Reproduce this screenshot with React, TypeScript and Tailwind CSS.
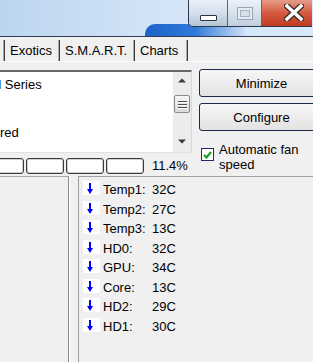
import React from 'react'

const SENSORS = [
  { label: 'Temp1:', value: '32C' },
  { label: 'Temp2:', value: '27C' },
  { label: 'Temp3:', value: '13C' },
  { label: 'HD0:', value: '32C' },
  { label: 'GPU:', value: '34C' },
  { label: 'Core:', value: '13C' },
  { label: 'HD2:', value: '29C' },
  { label: 'HD1:', value: '30C' },
]

function DownArrow() {
  return (
    <div className="w-[17px] h-[14px] bg-white flex-shrink-0">
      <svg width="17" height="14" viewBox="0 0 17 14">
        <rect x="6" y="2" width="2" height="7" fill="#0000ff" />
        <path d="M4 8 L10 8 L7 13 Z" fill="#0000ff" />
      </svg>
    </div>
  )
}

function WindowButtons() {
  return (
    <div className="relative self-start flex-shrink-0 ml-[-58px] flex h-[27px] border-l border-b border-[#2e3a4c] rounded-bl-[5px] overflow-hidden">
      {/* minimize */}
      <div className="w-[39px] border-r border-[#5a6878] bg-gradient-to-b from-[#eaf1f8] via-[#d3dfeb] to-[#b4c4d6] flex items-end justify-center pb-[5px]">
        <div className="w-[17px] h-[6px] rounded-[1px] bg-white border border-[#2c3440]" />
      </div>
      {/* maximize (disabled look) */}
      <div className="w-[34px] border-r border-[#5a6878] bg-gradient-to-b from-[#eaf1f8] via-[#d7e2ed] to-[#c0cedc] flex items-start justify-center pt-[7px]">
        <div className="w-[16px] h-[13px] border border-[#9aa6b4] bg-[#e4ebf2] p-[2px]">
          <div className="w-full h-full border border-[#a6b2bf] bg-[#d6dfe8]" />
        </div>
      </div>
      {/* close */}
      <div className="w-[50px] bg-gradient-to-b from-[#e59a88] via-[#d45a40] to-[#c03a22] flex items-start pl-[22px] pt-[4px]">
        <svg width="20" height="17" viewBox="0 0 20 17">
          <path d="M3 2 L17 15 M17 2 L3 15" stroke="#3a2a26" strokeWidth="6" strokeLinecap="square" />
          <path d="M3 2 L17 15 M17 2 L3 15" stroke="#ffffff" strokeWidth="3.5" strokeLinecap="square" />
        </svg>
      </div>
    </div>
  )
}

function Tab({ label, width }: { label: string; width: string }) {
  return (
    <div
      className={`${width} h-[21px] pl-[5px] flex items-center border-r border-[#3c3c3c] shadow-[inset_-1px_0_0_#a8a8a8] leading-none`}
    >
      {label}
    </div>
  )
}

function ScrollBar() {
  return (
    <div className="w-[18px] h-full bg-[#ececec] flex flex-col items-center">
      <div className="h-[17px] w-full flex items-center justify-center">
        <svg width="8" height="5" viewBox="0 0 8 5">
          <path d="M0 4.5 L4 0.5 L8 4.5 Z" fill="#3a3a3a" />
        </svg>
      </div>
      <div className="mt-[6px] w-[16px] h-[18px] rounded-[2px] border border-[#8a8a8a] bg-gradient-to-b from-[#f6f6f6] to-[#dadada] flex flex-col items-center justify-center gap-[2px]">
        <div className="w-[9px] h-[1px] bg-[#4c4c4c] shadow-[0_1px_0_#ffffff]" />
        <div className="w-[9px] h-[1px] bg-[#4c4c4c] shadow-[0_1px_0_#ffffff]" />
        <div className="w-[9px] h-[1px] bg-[#4c4c4c] shadow-[0_1px_0_#ffffff]" />
      </div>
      <div className="mt-auto mb-[2px] h-[17px] w-full flex items-center justify-center">
        <svg width="8" height="5" viewBox="0 0 8 5">
          <path d="M0 0.5 L4 4.5 L8 0.5 Z" fill="#3a3a3a" />
        </svg>
      </div>
    </div>
  )
}

export default function App() {
  return (
    <div className="w-[313px] h-[362px] overflow-hidden bg-[#f0f0f0] text-black text-[13px] font-['Liberation_Sans',Arial,sans-serif] flex flex-col">
      {/* Title bar */}
      <div className="h-[37px] flex-shrink-0 border-b border-[#33404f] bg-gradient-to-r from-[#bcd5ef] via-[#d2e4f7] to-[#d9e9f9] flex items-end">
        {/* blue glow at the bottom of the glass frame */}
        <div className="ml-[145px] w-[101px] h-[12px] flex-shrink-0 rounded-tl-[10px] rounded-tr-[4px] bg-gradient-to-r from-[#1e62c9] via-[#2f7ad8] to-[#cfe2f6]" />
        <WindowButtons />
      </div>

      {/* Tabs */}
      <div className="h-[25px] flex-shrink-0 flex items-start pt-[3px] border-b border-white">
        <div className="w-[5px] h-[21px] border-r border-[#3c3c3c] shadow-[inset_-1px_0_0_#a8a8a8]" />
        <Tab label="Exotics" width="w-[55px]" />
        <Tab label="S.M.A.R.T." width="w-[75px]" />
        <Tab label="Charts" width="w-[53px]" />
      </div>

      {/* Top section */}
      <div className="flex pt-[7px] flex-shrink-0">
        <div className="w-[192px] flex-shrink-0 flex flex-col">
          <div className="mt-[1px] h-[83px] border-t-2 border-t-[#6a6a6a] border-r border-r-[#d8d8d8] border-b border-b-[#e2e2e2] bg-white flex">
            <div className="flex-1 pt-[1px] leading-[24px] whitespace-nowrap overflow-hidden">
              <div className="ml-[-6px]">d Series</div>
              <div>&nbsp;</div>
              <div>red</div>
            </div>
            <ScrollBar />
          </div>
          <div className="mt-[5px] flex items-center gap-[2px]">
            <div className="ml-[-14px] w-[38px] h-[16px] rounded-[3px] border border-[#3a3a3a] bg-white shadow-[inset_0_0_0_1px_#d0d0d0]" />
            <div className="w-[38px] h-[16px] rounded-[3px] border border-[#3a3a3a] bg-white shadow-[inset_0_0_0_1px_#d0d0d0]" />
            <div className="w-[38px] h-[16px] rounded-[3px] border border-[#3a3a3a] bg-white shadow-[inset_0_0_0_1px_#d0d0d0]" />
            <div className="w-[38px] h-[16px] rounded-[3px] border border-[#3a3a3a] bg-white shadow-[inset_0_0_0_1px_#d0d0d0]" />
            <span className="ml-[6px] leading-[16px]">11.4%</span>
          </div>
        </div>

        <div className="ml-[7px] w-[130px] flex-shrink-0 flex flex-col">
          <button className="h-[28px] w-[125px] rounded-[3px] border border-[#1c2b4a] bg-gradient-to-b from-[#f7f7f7] to-[#e2e2e2] text-[13px] leading-none">
            Minimize
          </button>
          <button className="mt-[6px] h-[28px] w-[125px] rounded-[3px] border border-[#1c2b4a] bg-gradient-to-b from-[#f7f7f7] to-[#e2e2e2] text-[13px] leading-none">
            Configure
          </button>
          <div className="mt-[11px] flex items-start">
            <div className="ml-[2px] mt-[6px] w-[13px] h-[13px] border border-[#1c2f5e] bg-white flex items-center justify-center flex-shrink-0">
              <svg width="9" height="8" viewBox="0 0 9 8">
                <path d="M1 4 L3.5 6.5 L8 1" stroke="#1f9e2a" strokeWidth="2.2" fill="none" />
              </svg>
            </div>
            <div className="ml-[5px] w-[90px] leading-[15px]">Automatic fan speed</div>
          </div>
        </div>
      </div>

      {/* Bottom panels */}
      <div className="mt-[2px] flex-1 flex min-h-0">
        <div className="w-[69px] border-t border-t-[#a8a8a8] border-r border-r-[#8a8a8a] shadow-[1px_0_0_#ffffff]" />
        <div className="ml-[9px] flex-1 border-t border-l border-[#a0a0a0] pt-[4px] pl-[4px] flex flex-col">
          {SENSORS.map((s) => (
            <div key={s.label} className="h-[19.5px] flex items-start leading-[17px]">
              <DownArrow />
              <span className="ml-[3px] w-[49px] whitespace-nowrap">{s.label}</span>
              <span>{s.value}</span>
            </div>
          ))}
        </div>
      </div>
    </div>
  )
}
